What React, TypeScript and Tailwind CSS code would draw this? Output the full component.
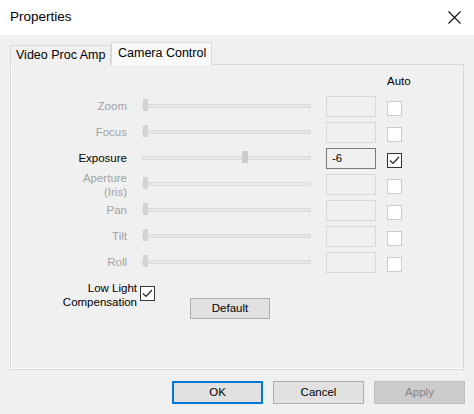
import React from "react";

interface Row {
    label: string;
    enabled?: boolean;
    value?: string;
    auto?: boolean;
    thumb?: number;
    twoLine?: string;
}

const rows: Row[] = [
    { label: "Zoom", thumb: 1 },
    { label: "Focus", thumb: 1 },
    { label: "Exposure", enabled: true, value: "-6", auto: true, thumb: 100 },
    { label: "Aperture", twoLine: "(Iris)", thumb: 1 },
    { label: "Pan", thumb: 1 },
    { label: "Tilt", thumb: 1 },
    { label: "Roll", thumb: 1 },
];

function Check({ checked }: { checked?: boolean }) {
    return (
        <div
            className={`w-[15px] h-[15px] bg-white border flex items-center justify-center ${
                checked ? "border-[#333333]" : "border-[#cccccc]"
            }`}
        >
            {checked && (
                <svg width="11" height="9" viewBox="0 0 11 9" fill="none">
                    <path d="M1 4.5 L4 7.5 L10 1" stroke="#222" strokeWidth="1.2" />
                </svg>
            )}
        </div>
    );
}

function SliderRow({ row }: { row: Row }) {
    const textColor = row.enabled ? "text-[#000000]" : "text-[#a3a3a3]";
    return (
        <div className="flex items-start h-[26px]">
            <div
                className={`w-[115px] text-right text-[11.5px] leading-[14px] ${textColor} ${
                    row.twoLine ? "mt-[-3px] h-[28px]" : "pt-[3px]"
                }`}
            >
                <div>{row.label}</div>
                {row.twoLine && <div>{row.twoLine}</div>}
            </div>
            <div className="ml-[15px] w-[169px] h-[21px] relative">
                <div className="absolute left-0 right-0 top-[8px] h-[4px] bg-[#e6e6e6] border border-[#dcdcdc]" />
                {row.enabled ? (
                    <div
                        className="absolute top-[3px] w-[6px] h-[12px] bg-[#cdcdcd]"
                        style={{ left: row.thumb }}
                    />
                ) : (
                    <div
                        className="absolute top-[3px] w-[5px] h-[12px] bg-[#d4d4d4]"
                        style={{ left: row.thumb }}
                    />
                )}
            </div>
            <div
                className={`ml-[15px] w-[50px] h-[21px] border px-[5px] text-[11.5px] leading-[19px] ${
                    row.enabled ? "border-[#7a7a7a] bg-[#f0f0f0] text-black" : "border-[#d8d8d8] bg-[#f0f0f0]"
                }`}
            >
                {row.value}
            </div>
            <div className="ml-[11px] mt-[5px]">
                <Check checked={row.auto} />
            </div>
        </div>
    );
}

export default function App() {
    return (
        <div
            className="w-[474px] h-[414px] bg-[#f0f0f0] flex flex-col overflow-hidden select-none"
            style={{ fontFamily: '"Segoe UI", "Liberation Sans", Arial, sans-serif' }}
        >
            <div className="h-[35px] bg-white flex items-center justify-between pl-[10px] pr-[13px]">
                <span className="text-[13.5px] text-black">Properties</span>
                <svg width="13" height="13" viewBox="0 0 13 13">
                    <path d="M0.5 0.5 L12.5 12.5 M12.5 0.5 L0.5 12.5" stroke="#111" strokeWidth="1.1" />
                </svg>
            </div>

            <div className="px-[10px] pt-[8px]">
                <div className="flex items-end h-[21px] relative z-10">
                    <div className="w-[101px] h-[20px] border border-b-0 border-[#d9d9d9] bg-[#f0f0f0] text-[12.5px] leading-[19px] text-black pl-[5px] mb-[-1px] whitespace-nowrap">
                        Video Proc Amp
                    </div>
                    <div className="w-[101px] h-[23px] border border-b-0 border-[#d9d9d9] bg-[#f9f9f9] text-[12.5px] leading-[20px] text-black pl-[6px] mb-[-1px] whitespace-nowrap">
                        Camera Control
                    </div>
                </div>
                <div className="h-[306px] border border-[#d9d9d9]">
                    <div className="h-full border-l border-b border-white flex flex-col">
                        <div className="h-[31px] flex items-end pl-[375px] pb-[8px]">
                            <span className="text-[11.5px] leading-[14px] text-black">Auto</span>
                        </div>
                        {rows.map((r) => (
                            <SliderRow key={r.label} row={r} />
                        ))}
                        <div className="flex items-start mt-[3px]">
                            <div className="w-[125px] text-right text-[11.5px] leading-[14px] text-black">
                                Low Light
                                <br />
                                Compensation
                            </div>
                            <div className="ml-[3px] mt-[5px]">
                                <Check checked />
                            </div>
                            <div className="ml-[35px] mt-[17px] w-[80px] h-[21px] bg-[#e1e1e1] border border-[#adadad] text-[11.5px] leading-[19px] text-center text-black">
                                Default
                            </div>
                        </div>
                    </div>
                </div>
            </div>

            <div className="flex justify-end gap-[10px] pr-[9px] pt-[11px]">
                <div className="w-[91px] h-[23px] bg-[#e1e1e1] border-2 border-[#0078d7] text-[11.5px] leading-[19px] text-center text-black">
                    OK
                </div>
                <div className="w-[91px] h-[23px] bg-[#e1e1e1] border border-[#adadad] text-[11.5px] leading-[21px] text-center text-black">
                    Cancel
                </div>
                <div className="w-[91px] h-[23px] bg-[#cccccc] border border-[#bfbfbf] text-[11.5px] leading-[21px] text-center text-[#838383]">
                    Apply
                </div>
            </div>
        </div>
    );
}
